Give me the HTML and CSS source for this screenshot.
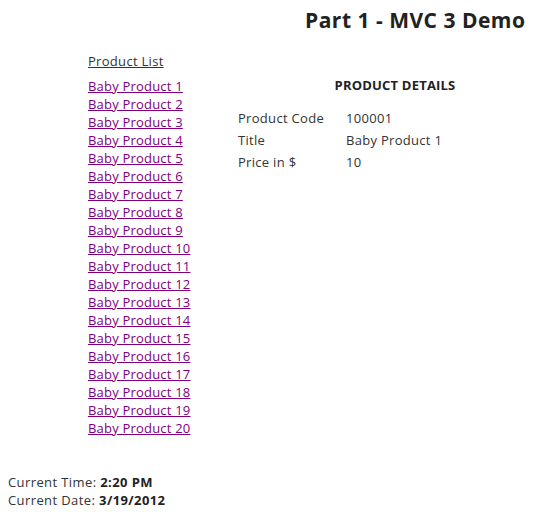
FILE: index.html
```html
<!DOCTYPE html>
<html>
<head>
<meta charset="utf-8">
<link rel="stylesheet" href="styles.css">
</head>
<body>
<header class="top">
  <h1 class="title">Part 1 - MVC 3 Demo</h1>
</header>
<div class="main">
  <nav class="nav">
    <a class="nav-head" href="#">Product List</a>
    <ul class="list">
      <li><a href="#">Baby Product 1</a></li>
      <li><a href="#">Baby Product 2</a></li>
      <li><a href="#">Baby Product 3</a></li>
      <li><a href="#">Baby Product 4</a></li>
      <li><a href="#">Baby Product 5</a></li>
      <li><a href="#">Baby Product 6</a></li>
      <li><a href="#">Baby Product 7</a></li>
      <li><a href="#">Baby Product 8</a></li>
      <li><a href="#">Baby Product 9</a></li>
      <li><a href="#">Baby Product 10</a></li>
      <li><a href="#">Baby Product 11</a></li>
      <li><a href="#">Baby Product 12</a></li>
      <li><a href="#">Baby Product 13</a></li>
      <li><a href="#">Baby Product 14</a></li>
      <li><a href="#">Baby Product 15</a></li>
      <li><a href="#">Baby Product 16</a></li>
      <li><a href="#">Baby Product 17</a></li>
      <li><a href="#">Baby Product 18</a></li>
      <li><a href="#">Baby Product 19</a></li>
      <li><a href="#">Baby Product 20</a></li>
    </ul>
  </nav>
  <section class="details">
    <h2 class="details-title">PRODUCT DETAILS</h2>
    <table class="info">
      <tr><td class="label">Product Code</td><td>100001</td></tr>
      <tr><td class="label">Title</td><td>Baby Product 1</td></tr>
      <tr><td class="label">Price in $</td><td>10</td></tr>
    </table>
  </section>
</div>
<footer class="foot">
  <div>Current Time: <b>2:20 PM</b></div>
  <div>Current Date: <b>3/19/2012</b></div>
</footer>
</body>
</html>
```
FILE: styles.css
```css
html, body {
  background: #fff;
}
html {
  overflow: hidden;
}
body {
  margin: 8px 8px 0;
  font-family: "Open Sans", "DejaVu Sans", sans-serif;
  font-size: 13px;
  color: #333;
  letter-spacing: 0.3px;
}
.top {
  padding-left: 297px;
}
.title {
  margin: 0;
  font-size: 21px;
  font-weight: bold;
  color: #222;
  line-height: 24px;
  letter-spacing: 0.5px;
  white-space: nowrap;
}
.main {
  display: flex;
  margin-top: 20px;
}
.nav {
  margin-left: 80px;
  width: 150px;
}
.nav-head {
  display: block;
  color: #333;
  line-height: 18px;
  margin-bottom: 7px;
}
.list {
  list-style: none;
  margin: 0;
  padding: 0;
}
.list li {
  line-height: 18px;
}
.list a {
  color: #800080;
  letter-spacing: 0.2px;
}
.details {
  padding-top: 24px;
  width: 240px;
}
.details-title {
  margin: 0 0 13px;
  font-size: 13px;
  font-weight: bold;
  text-align: center;
  color: #222;
  padding-left: 74px;
  letter-spacing: 0.2px;
}
.info {
  border-collapse: collapse;
}
.info td {
  padding: 0;
  height: 22px;
  font-size: 13px;
}
.info .label {
  width: 108px;
}
.foot {
  margin-top: 36px;
  line-height: 18px;
  letter-spacing: 0.4px;
}
.foot b {
  color: #222;
}
```
